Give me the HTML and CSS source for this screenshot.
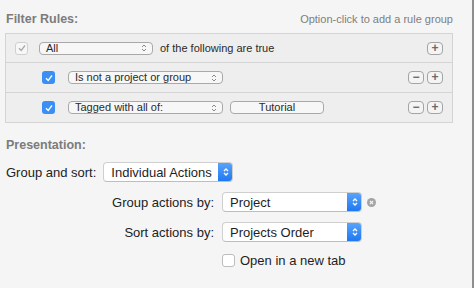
FILE: index.html
```html
<!DOCTYPE html>
<html lang="en">
<head>
  <meta charset="UTF-8">
  <title>Perspective Settings</title>
  <link rel="stylesheet" href="styles.css">
</head>
<body>
  <div class="panel">
    <div class="header">
      <span class="heading">Filter Rules:</span>
      <span class="hint">Option-click to add a rule group</span>
    </div>

    <div class="rules">
      <div class="rule">
        <span class="check check-dim"><svg viewBox="0 0 10 10"><path d="M2 5.2 L4.2 7.5 L8 2.5"/></svg></span>
        <span class="mini-popup popup-all">All <svg class="updown" viewBox="0 0 6 10"><path d="M1 4 L3 2 L5 4 M1 6 L3 8 L5 6"/></svg></span>
        <span class="rule-text">of the following are true</span>
        <span class="btns"><span class="sq">+</span></span>
      </div>
      <div class="rule indent">
        <span class="check check-on"><svg viewBox="0 0 10 10"><path d="M2 5.2 L4.2 7.5 L8 2.5"/></svg></span>
        <span class="mini-popup popup-wide">Is not a project or group <svg class="updown" viewBox="0 0 6 10"><path d="M1 4 L3 2 L5 4 M1 6 L3 8 L5 6"/></svg></span>
        <span class="btns"><span class="sq">&minus;</span><span class="sq">+</span></span>
      </div>
      <div class="rule indent">
        <span class="check check-on"><svg viewBox="0 0 10 10"><path d="M2 5.2 L4.2 7.5 L8 2.5"/></svg></span>
        <span class="mini-popup popup-wide">Tagged with all of: <svg class="updown" viewBox="0 0 6 10"><path d="M1 4 L3 2 L5 4 M1 6 L3 8 L5 6"/></svg></span>
        <span class="token">Tutorial</span>
        <span class="btns"><span class="sq">&minus;</span><span class="sq">+</span></span>
      </div>
    </div>

    <div class="presentation">
      <div class="heading">Presentation:</div>
      <div class="form-row">
        <span class="label">Group and sort:</span>
        <span class="popup popup-group">Individual Actions <span class="stepper"><svg viewBox="0 0 8 12"><path d="M2 5 L4 3 L6 5 M2 7 L4 9 L6 7"/></svg></span></span>
      </div>
      <div class="form-row sub">
        <span class="label">Group actions by:</span>
        <span class="popup popup-sub">Project <span class="stepper"><svg viewBox="0 0 8 12"><path d="M2 5 L4 3 L6 5 M2 7 L4 9 L6 7"/></svg></span></span>
        <svg class="clear" viewBox="0 0 10 10"><circle cx="5" cy="5" r="5"/><path d="M3.2 3.2 L6.8 6.8 M6.8 3.2 L3.2 6.8"/></svg>
      </div>
      <div class="form-row sub">
        <span class="label">Sort actions by:</span>
        <span class="popup popup-sub">Projects Order <span class="stepper"><svg viewBox="0 0 8 12"><path d="M2 5 L4 3 L6 5 M2 7 L4 9 L6 7"/></svg></span></span>
      </div>
      <div class="form-row sub check-row">
        <span class="label"></span>
        <span class="box"></span>
        <span class="box-text">Open in a new tab</span>
      </div>
    </div>
  </div>
</body>
</html>
```

FILE: styles.css
```css
body {
  margin: 0;
  background: #f5f5f5;
  font-family: "Liberation Sans", Arial, sans-serif;
  color: #222;
}
.panel {
  width: 474px;
  height: 288px;
  box-sizing: border-box;
  border-right: 2px solid #8e8e8e;
  padding: 8px 0 0 5px;
  overflow: hidden;
}
.header {
  width: 448px;
  height: 22px;
  display: flex;
  align-items: center;
  justify-content: space-between;
}
.heading {
  font-size: 12.5px;
  font-weight: bold;
  color: #7c7c7c;
  padding-left: 1px;
}
.hint {
  font-size: 11px;
  color: #7e7e7e;
}
.rules {
  margin-top: 3px;
  width: 448px;
  box-sizing: border-box;
  border: 1px solid #d4d4d4;
  background: #eeeeee;
}
.rule {
  height: 29px;
  display: flex;
  align-items: center;
  padding: 0 9px;
  font-size: 11px;
}
.rule:first-child {
  height: 28px;
}
.rule + .rule {
  border-top: 1px solid #d4d4d4;
}
.rule.indent {
  padding-left: 36px;
}
.check {
  width: 13px;
  height: 13px;
  box-sizing: border-box;
  border-radius: 3px;
  display: flex;
  align-items: center;
  justify-content: center;
  margin-right: 11px;
  flex-shrink: 0;
}
.check svg {
  width: 10px;
  height: 10px;
  fill: none;
  stroke-width: 1.3;
}
.check-dim {
  border: 1px solid #d0d0d0;
  background: #f7f7f7;
}
.check-dim svg {
  stroke: #a9a9a9;
}
.check-on {
  background: #3a8ff5;
  margin-right: 13px;
}
.check-on svg {
  stroke: #fff;
}
.mini-popup {
  height: 13px;
  box-sizing: border-box;
  border: 1px solid #a9a9a9;
  border-radius: 4px;
  background: #f7f7f7;
  display: flex;
  align-items: center;
  justify-content: space-between;
  padding: 0 5px 0 6px;
  color: #2a2a2a;
  line-height: 1;
}
.popup-all {
  width: 114px;
}
.popup-wide {
  width: 155px;
}
.updown {
  width: 6px;
  height: 10px;
  fill: none;
  stroke: #8a8a8a;
  stroke-width: 1;
}
.rule-text {
  margin-left: 7px;
  color: #2a2a2a;
}
.token {
  margin-left: 7px;
  width: 94px;
  height: 13px;
  box-sizing: border-box;
  border: 1px solid #a9a9a9;
  border-radius: 4px;
  background: #f7f7f7;
  text-align: center;
  line-height: 11px;
  color: #2a2a2a;
}
.btns {
  margin-left: auto;
  display: flex;
  gap: 3px;
}
.sq {
  width: 16px;
  height: 13px;
  box-sizing: border-box;
  border: 1px solid #a4a4a4;
  border-radius: 4px;
  background: #f4f4f4;
  color: #6a6a6a;
  font-size: 12px;
  font-weight: bold;
  line-height: 11px;
  text-align: center;
}
.presentation {
  margin-top: 14px;
  display: flex;
  flex-direction: column;
  gap: 10px;
}
.presentation .heading {
  height: 16px;
  line-height: 16px;
  margin-bottom: -1px;
}
.form-row {
  display: flex;
  align-items: center;
  height: 20px;
  font-size: 13px;
  padding-left: 1px;
}
.form-row .label {
  margin-right: 7px;
}
.form-row.sub .label {
  width: 208px;
  margin-right: 8px;
  text-align: right;
}
.popup {
  height: 20px;
  box-sizing: border-box;
  border: 1px solid #cfcfcf;
  border-bottom-color: #bdbdbd;
  border-radius: 4px;
  background: #fff;
  display: flex;
  align-items: center;
  justify-content: space-between;
  padding-left: 7px;
  overflow: hidden;
  color: #1e1e1e;
}
.popup-group {
  width: 130px;
}
.popup-sub {
  width: 140px;
}
.stepper {
  width: 15px;
  height: 20px;
  margin-right: -1px;
  background: linear-gradient(#5aa6fb, #1d76f1);
  display: flex;
  align-items: center;
  justify-content: center;
  border-radius: 0 4px 4px 0;
}
.stepper svg {
  width: 8px;
  height: 12px;
  fill: none;
  stroke: #fff;
  stroke-width: 1.3;
}
.clear {
  width: 9px;
  height: 9px;
  margin-left: 5px;
}
.clear circle {
  fill: #a3a3a3;
}
.clear path {
  stroke: #f5f5f5;
  stroke-width: 1.4;
}
.check-row {
  height: 14px;
  margin-top: 1px;
}
.box {
  width: 13px;
  height: 13px;
  box-sizing: border-box;
  border: 1px solid #bdbdbd;
  border-radius: 3px;
  background: #fff;
  margin-right: 5px;
}
.box-text {
  color: #1e1e1e;
}
```
